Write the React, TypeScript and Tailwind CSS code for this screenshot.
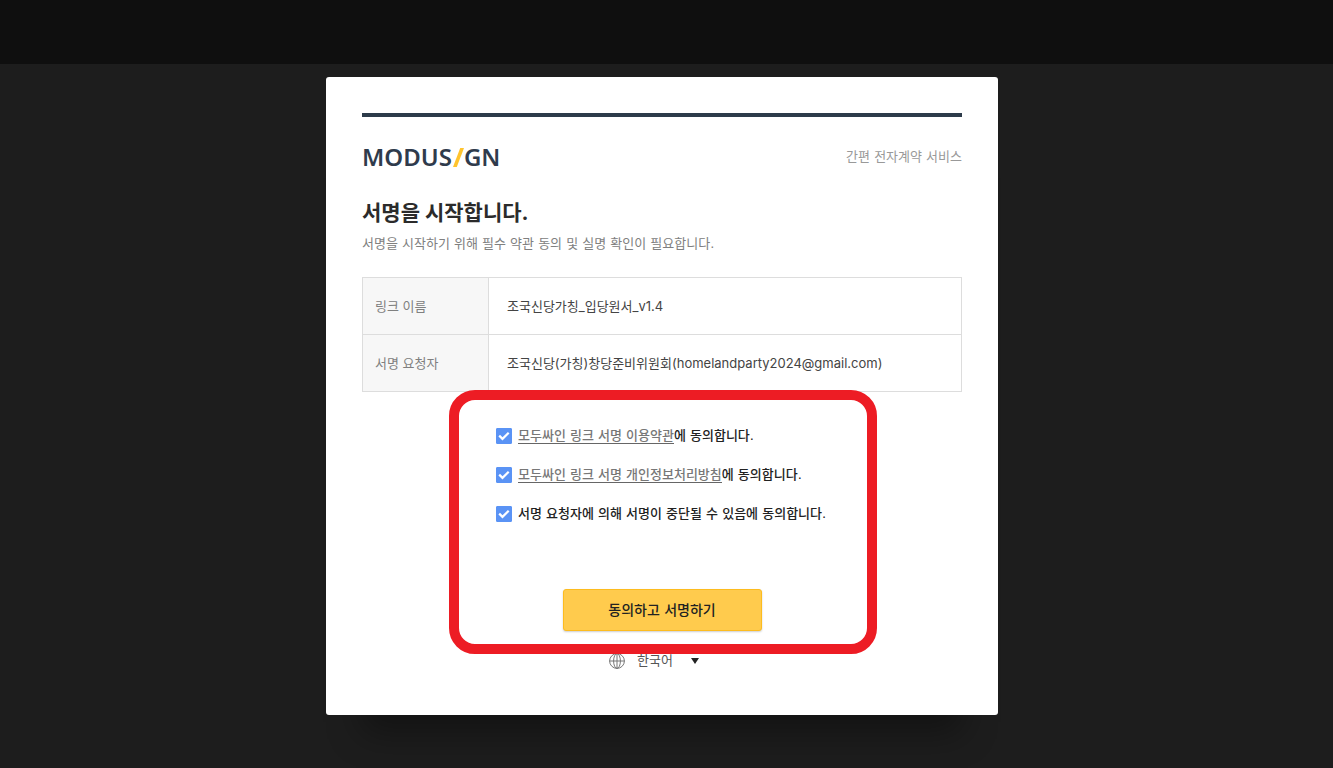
import { useState } from "react";
import type { ReactNode } from "react";

function Logo() {
  return (
    <div
      role="img"
      aria-label="MODUSIGN"
      className="flex h-6 items-center font-['Noto_Sans',sans-serif] text-[24px] leading-6 font-semibold text-[#2f3b4c]"
    >
      <span>MODUS</span>
      <svg viewBox="0 0 12 19" className="h-[19px] w-3" fill="#ffc42e" aria-hidden="true">
        <path d="M8.2 0H12L4.8 19H1z" />
      </svg>
      <span>GN</span>
    </div>
  );
}

function GlobeIcon() {
  return (
    <svg viewBox="0 0 16 16" className="size-4" fill="none" stroke="#777" aria-hidden="true">
      <circle cx="8" cy="8" r="7.4" />
      <ellipse cx="8" cy="8" rx="3.4" ry="7.4" />
      <path d="M8 .6v14.8M.6 8h14.8" />
    </svg>
  );
}

function Consent({ id, children }: { id: string; children: ReactNode }) {
  const [checked, setChecked] = useState(true);
  return (
    <li className="flex items-end gap-1.5">
      <span className="relative flex size-4 shrink-0">
        <input
          id={id}
          type="checkbox"
          checked={checked}
          onChange={(e) => setChecked(e.target.checked)}
          className="size-4 appearance-none rounded-[1px] border border-[#bbb] bg-white checked:border-[#5a93f5] checked:bg-[#5a93f5]"
        />
        {checked && (
          <svg
            viewBox="0 0 16 16"
            className="pointer-events-none absolute inset-0 size-4"
            fill="none"
            stroke="#fff"
            strokeWidth="2.2"
            aria-hidden="true"
          >
            <path d="M3.2 7.6l3.3 3.3 6.2-6.2" />
          </svg>
        )}
      </span>
      <label htmlFor={id} className="text-[13px] leading-4 font-medium text-[#222]">
        {children}
      </label>
    </li>
  );
}

function TermsLink({ children }: { children: ReactNode }) {
  return (
    <a href="#terms" className="border-b border-[#666] text-[#777]">
      {children}
    </a>
  );
}

const details = [
  { label: "링크 이름", value: "조국신당가칭_입당원서_v1.4" },
  { label: "서명 요청자", value: "조국신당(가칭)창당준비위원회(homelandparty2024@gmail.com)" },
];

export default function App() {
  return (
    <div className="flex min-h-screen flex-col bg-[#1d1d1d] font-['DejaVu_Sans','Noto_Sans_CJK_KR',sans-serif] text-[13px] leading-5">
      <header className="h-16 bg-[#0f0f0f]" />
      <main className="flex justify-center pt-[13px] pr-[9px] pb-[53px]">
        <section className="w-full max-w-2xl rounded-[3px] bg-white px-9 pt-9 pb-11 shadow-[0_54px_32px_-36px_rgba(0,0,0,0.35)]">
          <div className="h-1 bg-[#2d3b4a]" />
          <div className="mt-7 flex items-center justify-between">
            <Logo />
            <p className="text-[#999]">간편 전자계약 서비스</p>
          </div>
          <h1 className="mt-7 font-[Inter,'Noto_Sans_CJK_KR',sans-serif] text-[21px] leading-8 font-bold text-[#2b2b2b]">
            서명을 시작합니다.
          </h1>
          <p className="mt-[5px] text-[#808080]">서명을 시작하기 위해 필수 약관 동의 및 실명 확인이 필요합니다.</p>

          <table className="mt-[23px] w-full border-collapse text-left font-[Inter,'Noto_Sans_CJK_KR',sans-serif]">
            <tbody>
              {details.map((row) => (
                <tr key={row.label} className="h-[57px]">
                  <th scope="row" className="w-[126px] border border-[#ddd] bg-[#f7f7f7] px-3 font-normal text-[#808080]">
                    {row.label}
                  </th>
                  <td className="border border-[#ddd] px-[18px] text-[#444]">{row.value}</td>
                </tr>
              ))}
            </tbody>
          </table>

          <div className="relative mx-auto w-[428px] pt-9">
            <ul className="ml-12 flex flex-col gap-[23px]">
              <Consent id="terms-of-use">
                <TermsLink>모두싸인 링크 서명 이용약관</TermsLink>에 동의합니다.
              </Consent>
              <Consent id="privacy">
                <TermsLink>모두싸인 링크 서명 개인정보처리방침</TermsLink>에 동의합니다.
              </Consent>
              <Consent id="suspension">서명 요청자에 의해 서명이 중단될 수 있음에 동의합니다.</Consent>
            </ul>
            <div className="pointer-events-none absolute -top-0.5 left-px h-[264px] w-[428px] rounded-[26px] border-10 border-[#ed1c24]" />
          </div>

          <div className="mt-[67px] flex flex-col items-center">
            <button
              type="button"
              className="h-[42px] w-[199px] rounded-[3px] border border-[#fdbc1f] bg-[#ffcb4d] text-[14px] font-medium text-[#222] shadow-[0_1px_2px_rgba(0,0,0,0.2)]"
            >
              동의하고 서명하기
            </button>
            <div className="mt-5 flex items-center gap-3 pr-4">
              <GlobeIcon />
              <div className="relative flex items-center">
                <select aria-label="언어" defaultValue="ko" className="w-[62px] appearance-none bg-transparent text-[#555]">
                  <option value="ko">한국어</option>
                </select>
                <svg viewBox="0 0 8 6" className="pointer-events-none absolute right-0 h-1.5 w-2" fill="#222" aria-hidden="true">
                  <path d="M0 0h8L4 6z" />
                </svg>
              </div>
            </div>
          </div>
        </section>
      </main>
    </div>
  );
}
